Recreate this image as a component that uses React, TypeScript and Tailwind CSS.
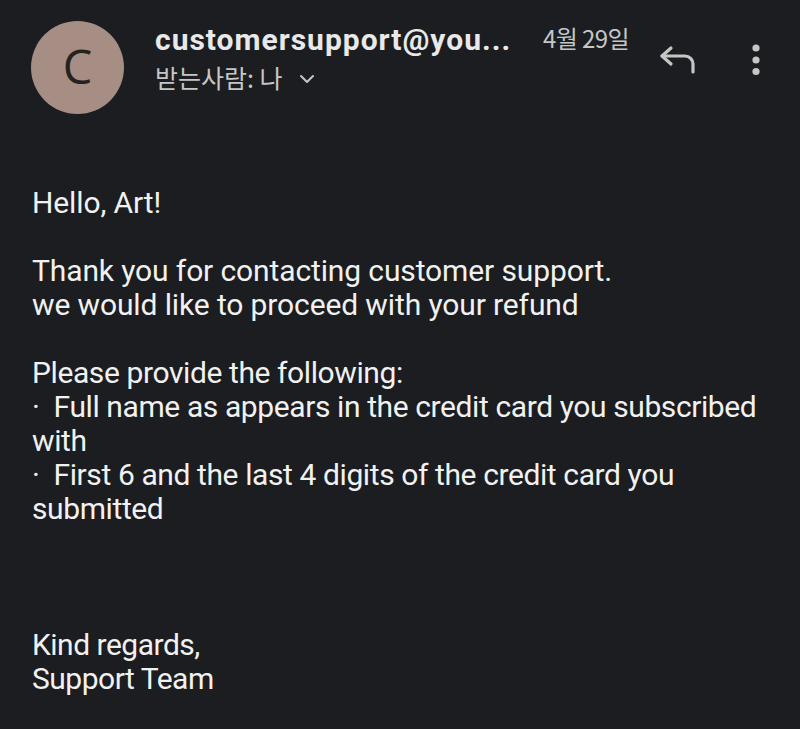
import React from "react";

const body = [
  "Hello, Art!",
  "",
  "Thank you for contacting customer support.",
  "we would like to proceed with your refund",
  "",
];

const ReplyIcon = () => (
  <svg width="38" height="30" viewBox="0 0 38 30" fill="none" stroke="#c4c7c5" strokeWidth="3.2" strokeLinecap="round" strokeLinejoin="round">
    <path d="M12 3 L3 11 L12 19" />
    <path d="M3 11 H26 a8 8 0 0 1 8 8 V27" />
  </svg>
);

const MoreIcon = () => (
  <svg width="10" height="32" viewBox="0 0 10 32" fill="#c4c7c5">
    <circle cx="5" cy="4" r="3.6" />
    <circle cx="5" cy="16" r="3.6" />
    <circle cx="5" cy="27.5" r="3.6" />
  </svg>
);

const Chevron = () => (
  <svg width="16" height="10" viewBox="0 0 16 10" fill="none" stroke="#c4c7c5" strokeWidth="2" strokeLinecap="round" strokeLinejoin="round">
    <path d="M2 2 L8 8 L14 2" />
  </svg>
);

export default function App() {
  return (
    <div className="w-[800px] h-[729px] bg-[#1b1d20] overflow-hidden font-['Roboto','Noto_Sans_CJK_KR',sans-serif]">
      <header className="flex items-start pl-[31px] pt-[21px] pr-[39px]">
        <div className="w-[93px] h-[93px] rounded-full bg-[#a68e85] flex items-center justify-center shrink-0">
          <span className="text-[#27221f] text-[47px] leading-none font-normal font-['Open_Sans',sans-serif] -mt-[3px]">C</span>
        </div>
        <div className="ml-[31px] flex-1">
          <div className="flex items-center">
            <span className="text-[#e9e9ea] text-[30px] font-bold leading-[38px] tracking-[1px]">
              customersupport@you...
            </span>
            <span className="ml-[32px] text-[#c4c7c5] text-[24px] font-['Noto_Sans_CJK_KR',sans-serif] leading-[30px] tracking-[-0.6px] -mt-[4px]">
              4월 29일
            </span>
          </div>
          <div className="flex items-center mt-[2px] text-[#c4c7c5] text-[25px] font-['Noto_Sans_CJK_KR',sans-serif] leading-[32px]">
            <span>받는사람: 나</span>
            <span className="ml-[16px] mt-[4px]">
              <Chevron />
            </span>
          </div>
        </div>
        <div className="flex items-start pt-[24px] gap-[54px]">
          <ReplyIcon />
          <div className="-mt-[1px]">
            <MoreIcon />
          </div>
        </div>
      </header>

      <main className="pl-[32px] pt-[72px] text-[#f1f1f1] text-[30px] leading-[34px]">
        <div className="tracking-[-0.12px]">
          {body.map((line, i) => (
            <div key={i} className="h-[34px] whitespace-pre">{line}</div>
          ))}
        </div>
        <div className="tracking-[-0.4px] pr-[20px]">
          <div>Please provide the following:</div>
          <div>·&nbsp;&nbsp;Full name as appears in the credit card you subscribed with</div>
          <div>·&nbsp;&nbsp;First 6 and the last 4 digits of the credit card you submitted</div>
        </div>
        <div className="h-[34px]" />
        <div className="h-[34px]" />
        <div className="h-[34px]" />
        <div className="tracking-[-0.5px]">
          <div>Kind regards,</div>
          <div>Support Team</div>
        </div>
      </main>
    </div>
  );
}
